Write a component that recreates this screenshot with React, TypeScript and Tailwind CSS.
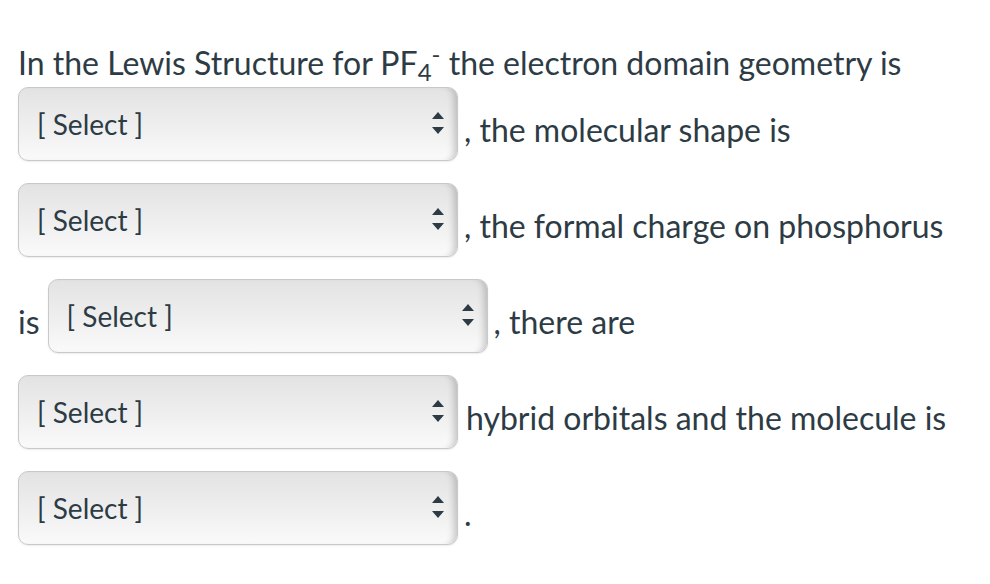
import { useState } from "react";

const OPTIONS = ["[ Select ]", "tetrahedral", "trigonal bipyramidal", "see-saw", "octahedral"];

function Dropdown() {
  const [value, setValue] = useState(OPTIONS[0]);

  return (
    <div className="relative w-[440px] h-[74px] shrink-0">
      <select
        value={value}
        onChange={(e) => setValue(e.target.value)}
        className="w-full h-full appearance-none rounded-[10px] border border-[#c9c9c9] bg-gradient-to-b from-[#e3e3e3] via-[#eeeeee] to-[#fafafa] pl-[18px] text-[28px] text-[#2d3b45] font-['Lato',sans-serif] shadow-[inset_-8px_0_7px_-5px_rgba(0,0,0,0.2),0_1px_2px_rgba(0,0,0,0.08)] outline-none"
      >
        {OPTIONS.map((o) => (
          <option key={o} value={o}>
            {o}
          </option>
        ))}
      </select>
      {/* up / down arrows */}
      <svg
        className="pointer-events-none absolute right-[14px] top-[25px]"
        width="12"
        height="23"
        viewBox="0 0 12 23"
      >
        <path d="M6 0 L12 7 L0 7 Z" fill="#2d3b45" />
        <path d="M0 15 L12 15 L6 22 Z" fill="#2d3b45" />
      </svg>
    </div>
  );
}

export default function App() {
  return (
    <div className="min-h-screen bg-white px-[18px] pt-[43px] text-[32px] text-[#2d3b45] font-['Lato',sans-serif]">
      <p className="leading-[40px]">
        In the Lewis Structure for PF<sub>4</sub>
        <sup>-</sup> the electron domain geometry is
      </p>

      <div className="flex flex-col gap-[22px] mt-[4px]">
        {/* geometry */}
        <div className="flex items-start gap-[6px]">
          <Dropdown />
          <span className="leading-[40px] mt-[23px]">, the molecular shape is</span>
        </div>

        {/* shape */}
        <div className="flex items-start gap-[6px]">
          <Dropdown />
          <span className="leading-[40px] mt-[23px]">, the formal charge on phosphorus</span>
        </div>

        {/* formal charge */}
        <div className="flex items-start">
          <span className="leading-[40px] mt-[23px] mr-[8px]">is</span>
          <Dropdown />
          <span className="leading-[40px] mt-[23px] ml-[6px]">, there are</span>
        </div>

        {/* hybrid orbitals */}
        <div className="flex items-start gap-[8px]">
          <Dropdown />
          <span className="leading-[40px] mt-[23px]">hybrid orbitals and the molecule is</span>
        </div>

        {/* polarity */}
        <div className="flex items-start gap-[6px]">
          <Dropdown />
          <span className="leading-[40px] mt-[23px]">.</span>
        </div>
      </div>
    </div>
  );
}
